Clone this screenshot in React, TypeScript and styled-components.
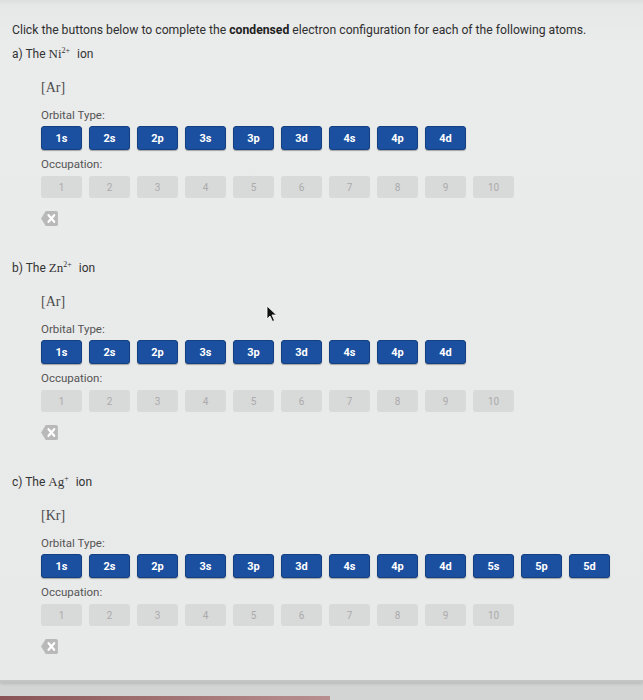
import React from 'react';
import styled, {createGlobalStyle} from "styled-components";

type Atom = {
    letter: string
    symbol: string
    charge: string
    core: string
    orbitals: string[]
}

const atoms: Atom[] = [
    {letter: 'a', symbol: 'Ni', charge: '2+', core: 'Ar', orbitals: ['1s', '2s', '2p', '3s', '3p', '3d', '4s', '4p', '4d']},
    {letter: 'b', symbol: 'Zn', charge: '2+', core: 'Ar', orbitals: ['1s', '2s', '2p', '3s', '3p', '3d', '4s', '4p', '4d']},
    {letter: 'c', symbol: 'Ag', charge: '+', core: 'Kr', orbitals: ['1s', '2s', '2p', '3s', '3p', '3d', '4s', '4p', '4d', '5s', '5p', '5d']},
]

const occupations = [1, 2, 3, 4, 5, 6, 7, 8, 9, 10]

const DeleteIcon = () => (
    <svg width="17" height="15" viewBox="0 0 18 16">
        <path d="M5 0 H16 Q18 0 18 2 V14 Q18 16 16 16 H5 L0 8 Z" fill="#b9b9b9"/>
        <path d="M8 4.5 L14 11.5 M14 4.5 L8 11.5" stroke="#fff" strokeWidth="2.4" strokeLinecap="round"/>
    </svg>
)

const Cursor = () => (
    <svg width="12" height="18" viewBox="0 0 12 18">
        <path d="M1 1 L1 14 L4 11 L6.5 16.5 L8.5 15.5 L6 10 L10.5 10 Z" fill="#111" stroke="#fff" strokeWidth="0.8"/>
    </svg>
)

export default function App() {
    return (
        <Page>
            <GlobalStyle/>
            <Panel>
                <Intro>
                    Click the buttons below to complete the <b>condensed</b> electron configuration for each of the following atoms.
                </Intro>
                {atoms.map((atom) => (
                    <Section key={atom.letter}>
                        <Question>
                            {atom.letter}) The <Formula>{atom.symbol}<sup>{atom.charge}</sup></Formula> ion
                        </Question>
                        <Content>
                            <Core>[{atom.core}]</Core>
                            <Label>Orbital Type:</Label>
                            <ButtonRow>
                                {atom.orbitals.map((o) => (
                                    <OrbitalButton key={o}>{o}</OrbitalButton>
                                ))}
                            </ButtonRow>
                            <Label $top={6}>Occupation:</Label>
                            <ButtonRow $top={4}>
                                {occupations.map((n) => (
                                    <NumberButton key={n} disabled>{n}</NumberButton>
                                ))}
                            </ButtonRow>
                            <DeleteButton aria-label="delete">
                                <DeleteIcon/>
                            </DeleteButton>
                        </Content>
                    </Section>
                ))}
                <Pointer>
                    <Cursor/>
                </Pointer>
            </Panel>
            <Footer>
                <RedStrip/>
            </Footer>
        </Page>
    );
}

const GlobalStyle = createGlobalStyle`
    * {
        box-sizing: border-box;
    }
    body {
        margin: 0;
        background: #d2d3d3;
        font-family: Roboto, "Liberation Sans", sans-serif;
    }
`;

const Page = styled.div`
    width: 643px;
    height: 700px;
    overflow: hidden;
    display: flex;
    flex-direction: column;
`;

const Panel = styled.div`
    position: relative;
    height: 682px;
    background: linear-gradient(180deg, #dcdddd 0, #e6e7e7 5px, #eaebeb 40px, #e8e9e9 100%);
    border-bottom: 2px solid #c4c5c5;
    padding: 22px 0 0 12px;
    box-shadow: 0 2px 3px rgba(0, 0, 0, 0.12);
`;

const Intro = styled.p`
    margin: 0;
    font-size: 12.2px;
    line-height: 16px;
    color: #2f3030;

    b {
        font-weight: 700;
        color: #222;
    }
`;

const Section = styled.div`
    margin-top: 5px;

    & + & {
        margin-top: 31px;
    }
`;

const Question = styled.div`
    font-size: 12px;
    line-height: 16px;
    color: #333;
`;

const Formula = styled.span`
    font-family: "Liberation Serif", "DejaVu Serif", serif;
    font-size: 13px;

    sup {
        font-size: 8px;
        vertical-align: 5px;
        margin-right: 4px;
    }
`;

const Content = styled.div`
    padding-left: 29px;
    display: flex;
    flex-direction: column;
    align-items: flex-start;
`;

const Core = styled.div`
    margin-top: 18px;
    font-family: "Liberation Serif", "DejaVu Serif", serif;
    font-size: 14px;
    line-height: 16px;
    color: #4a4a4a;
`;

const Label = styled.div<{ $top?: number }>`
    margin-top: ${(p) => p.$top ?? 11}px;
    font-size: 11.5px;
    line-height: 16px;
    color: #555;
`;

const ButtonRow = styled.div<{ $top?: number }>`
    margin-top: ${(p) => p.$top ?? 3}px;
    display: flex;
    gap: 7px;
`;

const OrbitalButton = styled.button`
    width: 41px;
    height: 24px;
    padding: 0;
    border: 1px solid #143f82;
    border-radius: 3px;
    background: #1b4f9f;
    box-shadow: 0 1px 1px rgba(0, 0, 0, 0.3);
    color: #fff;
    font-family: Roboto, "Liberation Sans", sans-serif;
    font-size: 11px;
    font-weight: 700;
    cursor: pointer;
`;

const NumberButton = styled.button`
    width: 41px;
    height: 22px;
    padding: 0;
    border: none;
    border-radius: 3px;
    background: #d8d9d9;
    color: #ababab;
    font-family: Roboto, "Liberation Sans", sans-serif;
    font-size: 10px;
`;

const DeleteButton = styled.button`
    margin-top: 13px;
    padding: 0;
    border: none;
    background: none;
    display: flex;
    cursor: pointer;
`;

const Pointer = styled.div`
    position: absolute;
    left: 266px;
    top: 305px;
    display: flex;
`;

const Footer = styled.div`
    flex: 1;
    background: #d3d4d4;
    display: flex;
    align-items: flex-end;
`;

const RedStrip = styled.div`
    width: 330px;
    height: 4px;
    background: linear-gradient(90deg, #8a5456, #b9908f);
`;
